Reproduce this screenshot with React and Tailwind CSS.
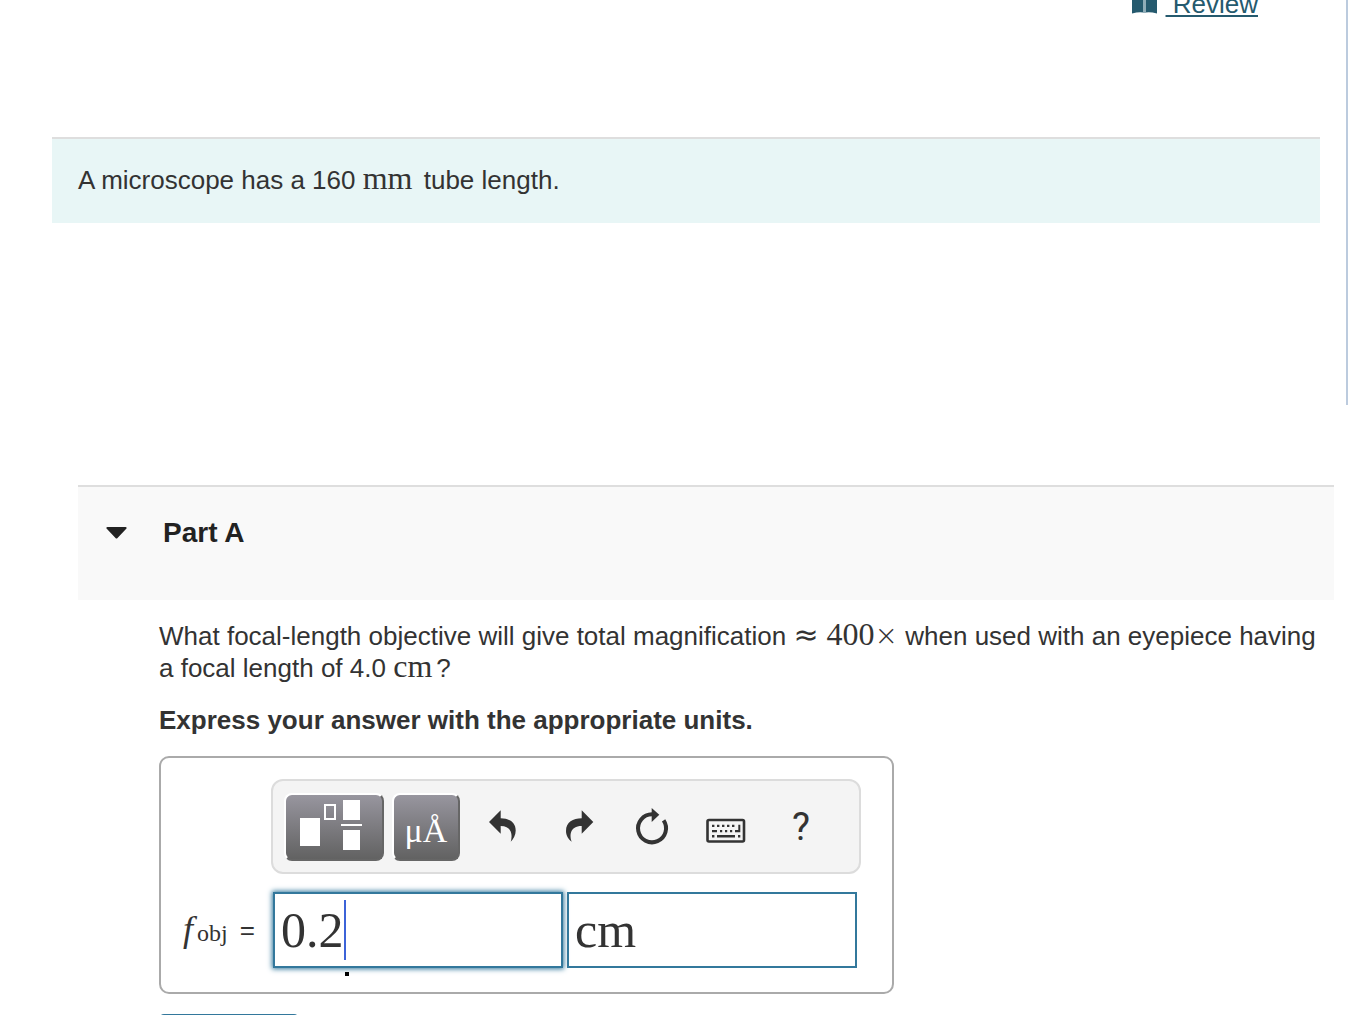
import { useState } from 'react';

const iconButton = 'flex w-[74px] items-center justify-center text-[#333]';
const templateButton =
  'flex h-[68px] items-center justify-center rounded-lg border-2 border-t-white border-l-white border-r-[#666] border-b-[#666] bg-linear-to-b from-[#98969f] to-[#626262] text-white';

function MathText({ children }) {
  return (
    <span className="font-['Liberation_Serif',serif] text-[32px] leading-5">{children}</span>
  );
}

function BookIcon() {
  return (
    <svg width="25" height="26" viewBox="0 0 25 26" aria-hidden="true">
      <path d="M0 1Q7 0 11.500 2V24.500Q7 23.500 0 25.500Z" fill="#255a6e" />
      <path d="M25 1Q18 0 13.500 2V24.500Q18 23.500 25 25.500Z" fill="#255a6e" />
      <path d="M11 2H14V25H11Z" fill="#8fadb8" />
    </svg>
  );
}

function UndoIcon() {
  return (
    <svg width="44" height="44" viewBox="0 0 44 44" fill="currentColor" aria-hidden="true">
      <path d="M8 17L19.700 5.300V13.300C28 13.300 34.700 17 34.700 25.500C34.700 30 32.500 34 29.700 36.700C31.500 31 31.500 21 19.700 21V28.700Z" />
    </svg>
  );
}

function RedoIcon() {
  return (
    <svg width="44" height="44" viewBox="0 0 44 44" fill="currentColor" aria-hidden="true">
      <path d="M38.300 17L26.700 5.300V13.300C18 13.300 11 17 11 26C11 30.500 13.500 34.500 16.700 36.700C14.500 31 14.500 21 26.700 21V28.700Z" />
    </svg>
  );
}

function ResetIcon() {
  return (
    <svg width="44" height="44" viewBox="0 0 44 44" aria-hidden="true">
      <path d="M23 9.300A14 14 0 1 0 34.600 15.400" fill="none" stroke="currentColor" strokeWidth="4" />
      <path d="M22.700 3L30.300 9.700L22.700 17Z" fill="currentColor" />
    </svg>
  );
}

function KeyboardIcon() {
  return (
    <svg width="44" height="44" viewBox="0 0 44 44" fill="currentColor" aria-hidden="true">
      <rect x="4.500" y="15" width="36.500" height="21.500" rx="1.500" fill="none" stroke="currentColor" strokeWidth="2.600" />
      <path d="M9 19.700h2.400v2.400H9zM14 19.700h2.400v2.400H14zM19 19.700h2.400v2.400H19zM24 19.700h2.400v2.400H24zM29 19.700h2.400v2.400H29z" />
      <path d="M9 25h5v2.200H9zM17 25h2.200v2.200H17zM22 25h2.200v2.200H22zM27 25h2.200v2.200H27zM32 25h3.300v-5.300H37.300v7.500H32z" />
      <path d="M9 30h2.400v2.400H9zM14 30h18v2.400H14zM35 30h2.300v2.400H35z" />
    </svg>
  );
}

function TemplateIcon() {
  return (
    <svg width="68" height="60" viewBox="0 0 68 60" fill="white" aria-hidden="true">
      <rect x="0" y="21" width="20" height="28" />
      <rect x="25" y="8" width="10" height="14" fill="none" stroke="white" strokeWidth="2" />
      <rect x="43" y="3" width="17" height="20" />
      <rect x="41" y="27" width="21" height="2" />
      <rect x="43" y="33" width="17" height="20" />
    </svg>
  );
}

function Toolbar() {
  return (
    <div className="flex h-[95px] w-[590px] items-center rounded-xl border-2 border-[#dcdcdc] bg-[#f4f4f4] px-[11px]">
      <button type="button" aria-label="Templates" className={`${templateButton} mr-2 w-[100px]`}>
        <TemplateIcon />
      </button>
      <button
        type="button"
        aria-label="Units"
        className={`${templateButton} mr-1.5 w-[68px] pt-2 font-['Liberation_Serif',serif] text-[34px] leading-none`}
      >
        μÅ
      </button>
      <button type="button" aria-label="Undo" className={iconButton}><UndoIcon /></button>
      <button type="button" aria-label="Redo" className={iconButton}><RedoIcon /></button>
      <button type="button" aria-label="Reset" className={iconButton}><ResetIcon /></button>
      <button type="button" aria-label="Keyboard shortcuts" className={iconButton}><KeyboardIcon /></button>
      <button type="button" aria-label="Help" className={`${iconButton} pl-1 font-[Roboto,sans-serif] text-[38px] leading-none`}>
        ?
      </button>
    </div>
  );
}

export default function App() {
  const [value, setValue] = useState('0.2');
  const [units, setUnits] = useState('cm');

  return (
    <div className="h-screen overflow-hidden bg-white font-['Liberation_Sans',Arial,sans-serif] text-[26px] leading-8 text-[#333]">
      <div className="mr-[7px] flow-root h-[405px] border-r-2 border-[#bccbde]">
        <div className="-mt-3 mr-[88px] flex h-[149px] items-start justify-end gap-[9px]">
          <BookIcon />
          <a href="#review" className="whitespace-pre text-[#255a6e] underline decoration-2 underline-offset-2"> Review</a>
        </div>
        <div className="mr-[26px] ml-[52px] border-t-2 border-[#dedede] bg-[#e8f6f6] px-[26px] pt-[25px] pb-[27px]">
          <p>
            A microscope has a 160 <MathText>mm</MathText>
            <span className="ml-1"> tube length.</span>
          </p>
        </div>
      </div>

      <section className="mt-20 mr-[21px] ml-[78px]">
        <header className="flex h-[115px] items-start border-t-2 border-[#dedede] bg-[#f9f9f9] pt-[30px] pl-7">
          <button type="button" aria-label="Collapse Part A" className="flex h-8 w-[57px] items-center">
            <svg width="21" height="12" viewBox="0 0 21 12" aria-hidden="true">
              <path d="M1.500 0H19.500Q21.500 0.500 20 2L11.500 11Q10.500 12 9.500 11L1 2Q-0.500 0.500 1.500 0Z" fill="#222" />
            </svg>
          </button>
          <h2 className="text-[28px] font-bold text-[#222]">Part A</h2>
        </header>

        <div className="pt-5 pl-[81px]">
          <p>
            What focal-length objective will give total magnification{' '}
            <span className="mr-2 font-['DejaVu_Sans',sans-serif] text-[30px] leading-5">≈</span>
            <MathText>400</MathText>
            <span className="font-['DejaVu_Sans',sans-serif] text-[28px] leading-5 font-extralight">×</span> when used
            with an eyepiece having a focal length of 4.0 <MathText>cm</MathText>
            <span className="ml-1">?</span>
          </p>
          <p className="mt-5 font-bold">Express your answer with the appropriate units.</p>

          <form className="mt-5 w-[735px] rounded-[10px] border-2 border-[#aaa] pt-[21px] pb-6" onSubmit={(e) => e.preventDefault()}>
            <div className="pl-[110px]">
              <Toolbar />
            </div>
            <div className="mt-[18px] flex items-center">
              <label htmlFor="answer" className="flex w-28 items-baseline pl-[22px]">
                <i className="w-3.5 font-['Liberation_Serif',serif] text-[36px] leading-none">f</i>
                <span className="mr-3 font-['Liberation_Serif',serif] text-2xl">obj</span>
                <span className="self-center leading-none">=</span>
              </label>
              <div className="relative mr-1">
                <input
                  id="answer"
                  value={value}
                  onChange={(e) => setValue(e.target.value)}
                  className="block h-[76px] w-[290px] border-2 border-[#33789c] pl-1.5 font-['Liberation_Serif',serif] text-[50px] caret-[#3c63d8] shadow-[0_0_5px_1px_#33789c] outline-none"
                />
                <span className="absolute top-2 left-[71px] h-[60px] w-0.5 bg-[#3c63d8]" />
                <span className="absolute top-20 left-[72px] size-1 bg-black" />
              </div>
              <input
                aria-label="Units"
                value={units}
                onChange={(e) => setUnits(e.target.value)}
                className="block h-[76px] w-[290px] border-2 border-[#33789c] pl-1.5 font-['Liberation_Serif',serif] text-[50px] outline-none"
              />
            </div>
          </form>

          <button type="button" aria-label="Submit" className="mt-5 ml-px h-16 w-[138px] rounded-sm bg-[#33789c]" />
        </div>
      </section>
    </div>
  );
}
